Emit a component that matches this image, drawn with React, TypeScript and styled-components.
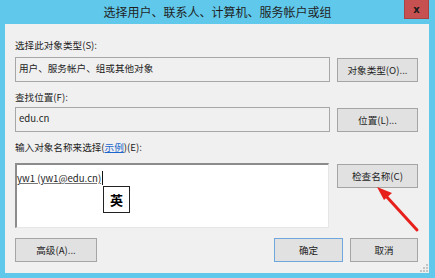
import React from 'react'
import styled, { createGlobalStyle } from 'styled-components'

const Global = createGlobalStyle`
html, body {
  margin: 0;
  padding: 0;
  background: #60c8ea;
}
body {
  font-family: "Noto Sans CJK SC", "Noto Sans", sans-serif;
}
`

const Frame = styled.div`
width: 435px;
height: 278px;
box-sizing: border-box;
background: #60c8ea;
display: flex;
flex-direction: column;
padding: 0 6px 5px 5px;
position: relative;
`

const TitleBar = styled.div`
height: 24px;
display: grid;
grid-template-columns: 1fr auto 1fr;
align-items: start;
margin: 0 -6px 0 -5px;
`

const Title = styled.div`
grid-column: 2;
font-size: 12px;
line-height: 24px;
color: #1f1f1f;
`

const Close = styled.div`
grid-column: 3;
justify-self: end;
margin-right: 6px;
width: 25px;
height: 19px;
box-sizing: border-box;
background: #c75050;
border: 1px solid #a94444;
border-top: 0;
display: flex;
align-items: center;
justify-content: center;
color: #1a1a1a;
font-family: "DejaVu Sans", sans-serif;
font-weight: bold;
font-size: 10px;
`

const Client = styled.div`
flex: 1;
background: #f0f0f0;
padding: 0 11px 0 10px;
display: flex;
flex-direction: column;
font-size: 9.6px;
color: #1e1e1e;
position: relative;
`

const Label = styled.div<{ top: number }>`
margin-top: ${p => p.top}px;
height: 14px;
line-height: 14px;
`

const Link = styled.span`
color: #1a66cc;
text-decoration: underline;
`

const Row = styled.div<{ top: number }>`
margin-top: ${p => p.top}px;
display: flex;
gap: 7px;
align-items: flex-start;
`

const ReadBox = styled.div`
width: 315px;
height: 25px;
box-sizing: border-box;
border: 1px solid #a7a7a7;
background: #f0f0f0;
padding: 3px 0 0 3px;
line-height: 14px;
`

const Button = styled.div<{ w: number; primary?: boolean }>`
width: ${p => p.w}px;
height: 24px;
box-sizing: border-box;
background: #e1e1e1;
border: 1px solid ${p => (p.primary ? '#6fa7dc' : '#a5a5a5')};
display: flex;
align-items: center;
justify-content: center;
font-size: 9.6px;
color: #1e1e1e;
`

const InputArea = styled.div`
width: 314px;
height: 65px;
box-sizing: border-box;
background: #fff;
border-top: 2px solid #8c8c8c;
border-left: 2px solid #8c8c8c;
border-right: 1px solid #e6e6e6;
border-bottom: 1px solid #e6e6e6;
padding: 0;
position: relative;
`

const Entry = styled.span`
font-size: 9.6px;
line-height: 27px;
text-decoration: underline;
text-decoration-color: #777;
color: #1e1e1e;
border-right: 1px solid #111;
padding-right: 1px;
`

const Ime = styled.div`
position: absolute;
left: 86px;
top: 21px;
width: 27px;
height: 27px;
box-sizing: border-box;
border: 1px solid #222;
background: #fff;
display: flex;
align-items: center;
justify-content: center;
font-size: 13px;
font-weight: bold;
color: #000;
`

const Footer = styled.div`
margin-top: 10px;
display: flex;
align-items: flex-start;
`

const Spacer = styled.div`
flex: 1;
`

const Grip = styled.svg`
position: absolute;
right: 1px;
bottom: 1px;
`

const Arrow = styled.svg`
position: absolute;
left: 0;
top: 0;
pointer-events: none;
`

const App = () => {
  return (
    <Frame>
      <Global />
      <TitleBar>
        <Title>选择用户、联系人、计算机、服务帐户或组</Title>
        <Close>x</Close>
      </TitleBar>
      <Client>
        <Label top={14}>选择此对象类型(S):</Label>
        <Row top={5}>
          <ReadBox>用户、服务帐户、组或其他对象</ReadBox>
          <Button w={81} style={{ marginTop: 1 }}>对象类型(O)...</Button>
        </Row>
        <Label top={8}>查找位置(F):</Label>
        <Row top={3}>
          <ReadBox>edu.cn</ReadBox>
          <Button w={81} style={{ marginTop: 1 }}>位置(L)...</Button>
        </Row>
        <Label top={8}>
          输入对象名称来选择(<Link>示例</Link>)(E):
        </Label>
        <Row top={9}>
          <InputArea>
            <Entry>yw1 (yw1@edu.cn)</Entry>
            <Ime>英</Ime>
          </InputArea>
          <Button w={81} style={{ marginTop: 1, marginLeft: 1 }}>检查名称(C)</Button>
        </Row>
        <Footer>
          <Button w={82}>高级(A)...</Button>
          <Spacer />
          <Button w={69} primary>确定</Button>
          <Button w={68} style={{ marginLeft: 7 }}>取消</Button>
        </Footer>
        <Grip width="8" height="8" viewBox="0 0 8 8">
          <rect x="6" y="0" width="2" height="2" fill="#c4c4c4" />
          <rect x="3" y="3" width="2" height="2" fill="#c4c4c4" />
          <rect x="6" y="3" width="2" height="2" fill="#c4c4c4" />
          <rect x="0" y="6" width="2" height="2" fill="#c4c4c4" />
          <rect x="3" y="6" width="2" height="2" fill="#c4c4c4" />
          <rect x="6" y="6" width="2" height="2" fill="#c4c4c4" />
        </Grip>
      </Client>
      <Arrow width="435" height="278" viewBox="0 0 435 278">
        <line x1="417" y1="230" x2="386" y2="196" stroke="#e8201c" strokeWidth="3" strokeLinecap="round" />
        <polygon points="377,187 392,193 384,200" fill="#e8201c" />
      </Arrow>
    </Frame>
  )
}

export default App
